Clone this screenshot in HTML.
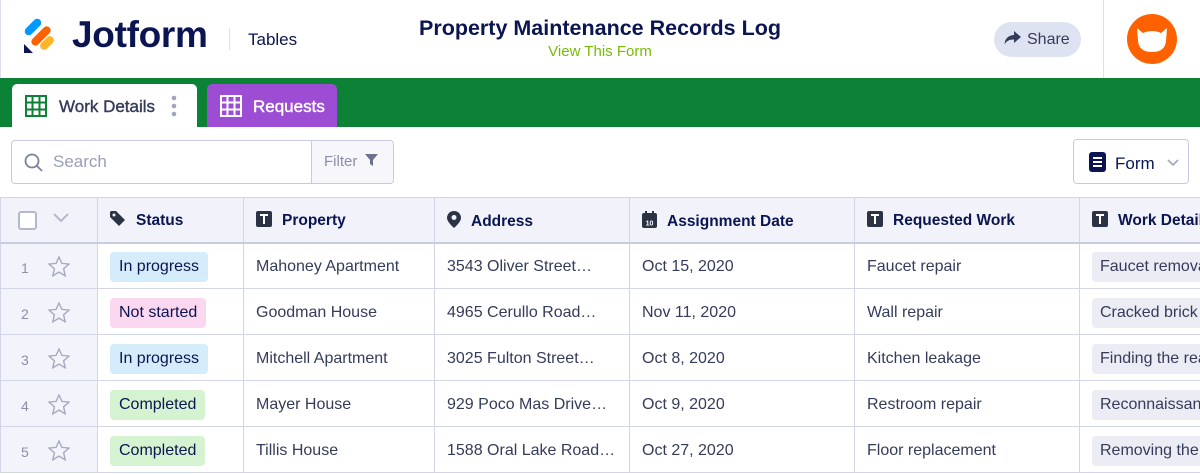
<!DOCTYPE html>
<html><head><meta charset="utf-8"><style>
*{box-sizing:border-box;margin:0;padding:0}
body{width:1200px;height:474px;overflow:hidden;background:#fff;font-family:"Liberation Sans",sans-serif;color:#343c5a;position:relative}
.abs{position:absolute}
.hdr{left:0;top:0;width:1200px;height:78px;background:#fff;border-left:1px solid #dcdff0}
.green{left:0;top:78px;width:1200px;height:49px;background:#0b8235}
.tab1{left:12px;top:84px;width:185px;height:44px;background:#fff;border-radius:5px 5px 0 0}
.tab2{left:207px;top:84px;width:130px;height:43px;background:#9c4dd3;border-radius:5px 5px 0 0;color:#fff}
.tabt{position:absolute;top:12px;font-size:17px;font-weight:bold}
table{position:absolute;left:0;top:197px;border-collapse:collapse;table-layout:fixed;width:1230px}
td,th{border:1px solid #d3d6e6;height:46px;font-size:16px;white-space:nowrap;overflow:hidden;padding:2px 12px 0;text-align:left}
th{background:#f2f3fa;font-weight:bold;color:#0a1551;height:45px;border-bottom:2px solid #c9cde0;font-size:15.5px}
td.n{background:#f3f4fb;color:#8a8fa8;font-size:14px;padding:2px 0 0 20px}
.pill{display:inline-block;padding:6px 9px;border-radius:4px;color:#0a1551}
.ip{background:#d5ecfb}.ns{background:#fbd7f0}.cp{background:#d6f3d1}
.wd{display:inline-block;padding:6px 8px;border-radius:4px;background:#ebecf4}
.ico{display:inline-block;vertical-align:-2px;margin-right:10px}
.st{margin-left:19px;vertical-align:-4px}
</style></head><body>
<div class="abs hdr"></div>
<svg class="abs" style="left:23px;top:18px" width="34" height="36" viewBox="0 0 34 36">
<rect x="6" y="-1" width="8" height="20" rx="4" transform="rotate(45 10 9)" fill="#0099ff"/>
<rect x="14" y="6" width="8" height="24" rx="4" transform="rotate(45 18 18)" fill="#ff6100"/>
<rect x="20" y="17" width="8" height="16" rx="4" transform="rotate(45 24 25)" fill="#ffb629"/>
<path d="M1 26 L1 35 L10 35 Z" fill="#0a1551"/>
</svg>
<div class="abs" style="left:72px;top:14px;font-size:37px;font-weight:bold;color:#0a1551;letter-spacing:-0.3px">Jotform</div>
<div class="abs" style="left:229px;top:28px;width:1px;height:22px;background:#dcdff0"></div>
<div class="abs" style="left:248px;top:30px;font-size:17px;color:#0a1551">Tables</div>
<div class="abs" style="left:0;width:1200px;top:16px;text-align:center;font-size:21.5px;font-weight:bold;color:#0a1551">Property Maintenance Records Log</div>
<div class="abs" style="left:0;width:1200px;top:43px;text-align:center;font-size:15px;color:#78bb07">View This Form</div>
<div class="abs" style="left:994px;top:22px;width:87px;height:35px;border-radius:18px;background:#dfe2f1;color:#343c5a;font-size:16px;padding:9px 0 0 10px">
<svg width="18" height="14" viewBox="0 0 18 14" style="vertical-align:-1px;margin-right:5px"><path d="M10 0 L17 6 L10 12 L10 8.5 C5 8.5 2.5 10 0.5 13.5 C1 7.5 4 4.5 10 4 Z" fill="#343c5a"/></svg>Share</div>
<div class="abs" style="left:1103px;top:0;width:1px;height:78px;background:#dcdff0"></div>
<svg class="abs" style="left:1127px;top:14px" width="50" height="50" viewBox="0 0 50 50"><circle cx="25" cy="25" r="25" fill="#ff6100"/><path d="M10 14 L16 19 Q25 15 34 19 L40 14 L39 27 Q38 38 25 38 Q12 38 11 27 Z" fill="#fff"/></svg>
<div class="abs green"></div>
<div class="abs tab1">
<svg class="abs" style="left:13px;top:11px" width="22" height="22" viewBox="0 0 22 22"><rect x="1" y="1" width="20" height="20" fill="none" stroke="#0b8235" stroke-width="2"/><path d="M7.5 1V21M14.5 1V21M1 7.5H21M1 14.5H21" stroke="#0b8235" stroke-width="2"/></svg>
<span class="tabt" style="left:47px;top:13px;color:#343c5a;font-weight:normal;-webkit-text-stroke:0.4px #343c5a">Work Details</span>
<svg class="abs" style="left:159px;top:11px" width="6" height="22"><circle cx="3" cy="3" r="2.3" fill="#a0a4bd"/><circle cx="3" cy="11" r="2.3" fill="#a0a4bd"/><circle cx="3" cy="19" r="2.3" fill="#a0a4bd"/></svg>
</div>
<div class="abs tab2">
<svg class="abs" style="left:13px;top:11px" width="22" height="22" viewBox="0 0 22 22"><rect x="1" y="1" width="20" height="20" fill="none" stroke="#fff" stroke-width="2"/><path d="M7.5 1V21M14.5 1V21M1 7.5H21M1 14.5H21" stroke="#fff" stroke-width="2"/></svg>
<span class="tabt" style="left:46px;top:13px;font-weight:normal;-webkit-text-stroke:0.4px #fff">Requests</span>
</div>
<div class="abs" style="left:11px;top:140px;width:383px;height:44px;border:1px solid #c8cbe0;border-radius:4px"></div>
<div class="abs" style="left:311px;top:141px;width:82px;height:42px;background:#f7f7fb;border-left:1px solid #c8cbe0;border-radius:0 4px 4px 0;font-size:15px;color:#8a8fa8;padding:12px 0 0 12px">Filter <svg width="13" height="12" viewBox="0 0 13 12" style="margin-left:3px"><path d="M0 0H13L8 6V12L5 10V6Z" fill="#6c7190"/></svg></div>
<svg class="abs" style="left:24px;top:153px" width="19" height="19" viewBox="0 0 19 19"><circle cx="8" cy="8" r="6.5" fill="none" stroke="#7c819c" stroke-width="1.8"/><path d="M13 13L18 18" stroke="#7c819c" stroke-width="1.8"/></svg>
<div class="abs" style="left:53px;top:152px;font-size:17px;color:#9a9eb6">Search</div>
<div class="abs" style="left:1073px;top:139px;width:116px;height:45px;border:1px solid #c8cbe0;border-radius:4px;padding:12px 0 0 15px;font-size:17px;color:#0a1551">
<svg width="17" height="20" viewBox="0 0 17 20" style="vertical-align:-3px;margin-right:9px"><rect width="17" height="20" rx="3" fill="#0a1551"/><path d="M4 6H13M4 10H13M4 14H13" stroke="#fff" stroke-width="2"/></svg>Form<svg width="12" height="8" viewBox="0 0 12 8" style="margin-left:12px;vertical-align:2px"><path d="M1 1L6 6L11 1" fill="none" stroke="#a0a4bd" stroke-width="1.6"/></svg></div>
<table>
<colgroup><col style="width:97px"><col style="width:146px"><col style="width:191px"><col style="width:195px"><col style="width:225px"><col style="width:225px"><col style="width:151px"></colgroup>
<tr>
<th style="padding-left:17px"><span style="display:inline-block;width:19px;height:19px;border:2px solid #b4b8cc;border-radius:3px;vertical-align:middle;background:#fff"></span><svg width="16" height="10" viewBox="0 0 16 10" style="margin-left:16px;vertical-align:2px"><path d="M1 1L8 8L15 1" fill="none" stroke="#b4b8cc" stroke-width="2"/></svg></th>
<th><svg class="ico" width="16" height="16" viewBox="0 0 16 16"><path d="M0 1V6L9 15L15 9L6 0H1Z" fill="#2c3345"/><circle cx="4" cy="4" r="1.5" fill="#f2f3fa"/></svg>Status</th>
<th><svg class="ico" width="16" height="16" viewBox="0 0 16 16"><rect width="16" height="16" rx="2" fill="#2c3345"/><path d="M4 4H12M8 4V13" stroke="#fff" stroke-width="2"/></svg>Property</th>
<th><svg class="ico" width="14" height="17" viewBox="0 0 14 17"><path d="M7 0C3 0 0 3 0 7C0 11 7 17 7 17C7 17 14 11 14 7C14 3 11 0 7 0Z" fill="#2c3345"/><circle cx="7" cy="6.5" r="2.5" fill="#f2f3fa"/></svg>Address</th>
<th><svg class="ico" width="15" height="17" viewBox="0 0 15 17"><rect y="2" width="15" height="15" rx="2" fill="#2c3345"/><rect x="3" y="0" width="2" height="4" fill="#2c3345"/><rect x="10" y="0" width="2" height="4" fill="#2c3345"/><text x="7.5" y="14.5" font-size="7" fill="#fff" text-anchor="middle" font-family="Liberation Sans">10</text></svg>Assignment Date</th>
<th><svg class="ico" width="16" height="16" viewBox="0 0 16 16"><rect width="16" height="16" rx="2" fill="#2c3345"/><path d="M4 4H12M8 4V13" stroke="#fff" stroke-width="2"/></svg>Requested Work</th>
<th><svg class="ico" width="16" height="16" viewBox="0 0 16 16"><rect width="16" height="16" rx="2" fill="#2c3345"/><path d="M4 4H12M8 4V13" stroke="#fff" stroke-width="2"/></svg>Work Details</th>
</tr>
<tr><td class="n">1<svg class="st" width="22" height="21" viewBox="0 0 22 21"><path d="M11 1L13.9 7.4L21 8.1L15.6 12.8L17.2 19.8L11 16.1L4.8 19.8L6.4 12.8L1 8.1L8.1 7.4Z" fill="none" stroke="#a6aac0" stroke-width="1.4"/></svg></td><td><span class="pill ip">In progress</span></td><td>Mahoney Apartment</td><td>3543 Oliver Street…</td><td>Oct 15, 2020</td><td>Faucet repair</td><td><span class="wd">Faucet removal</span></td></tr>
<tr><td class="n">2<svg class="st" width="22" height="21" viewBox="0 0 22 21"><path d="M11 1L13.9 7.4L21 8.1L15.6 12.8L17.2 19.8L11 16.1L4.8 19.8L6.4 12.8L1 8.1L8.1 7.4Z" fill="none" stroke="#a6aac0" stroke-width="1.4"/></svg></td><td><span class="pill ns">Not started</span></td><td>Goodman House</td><td>4965 Cerullo Road…</td><td>Nov 11, 2020</td><td>Wall repair</td><td><span class="wd">Cracked brick</span></td></tr>
<tr><td class="n">3<svg class="st" width="22" height="21" viewBox="0 0 22 21"><path d="M11 1L13.9 7.4L21 8.1L15.6 12.8L17.2 19.8L11 16.1L4.8 19.8L6.4 12.8L1 8.1L8.1 7.4Z" fill="none" stroke="#a6aac0" stroke-width="1.4"/></svg></td><td><span class="pill ip">In progress</span></td><td>Mitchell Apartment</td><td>3025 Fulton Street…</td><td>Oct 8, 2020</td><td>Kitchen leakage</td><td><span class="wd">Finding the real</span></td></tr>
<tr><td class="n">4<svg class="st" width="22" height="21" viewBox="0 0 22 21"><path d="M11 1L13.9 7.4L21 8.1L15.6 12.8L17.2 19.8L11 16.1L4.8 19.8L6.4 12.8L1 8.1L8.1 7.4Z" fill="none" stroke="#a6aac0" stroke-width="1.4"/></svg></td><td><span class="pill cp">Completed</span></td><td>Mayer House</td><td>929 Poco Mas Drive…</td><td>Oct 9, 2020</td><td>Restroom repair</td><td><span class="wd">Reconnaissance</span></td></tr>
<tr><td class="n">5<svg class="st" width="22" height="21" viewBox="0 0 22 21"><path d="M11 1L13.9 7.4L21 8.1L15.6 12.8L17.2 19.8L11 16.1L4.8 19.8L6.4 12.8L1 8.1L8.1 7.4Z" fill="none" stroke="#a6aac0" stroke-width="1.4"/></svg></td><td><span class="pill cp">Completed</span></td><td>Tillis House</td><td>1588 Oral Lake Road…</td><td>Oct 27, 2020</td><td>Floor replacement</td><td><span class="wd">Removing the</span></td></tr>
</table>
</body></html>
